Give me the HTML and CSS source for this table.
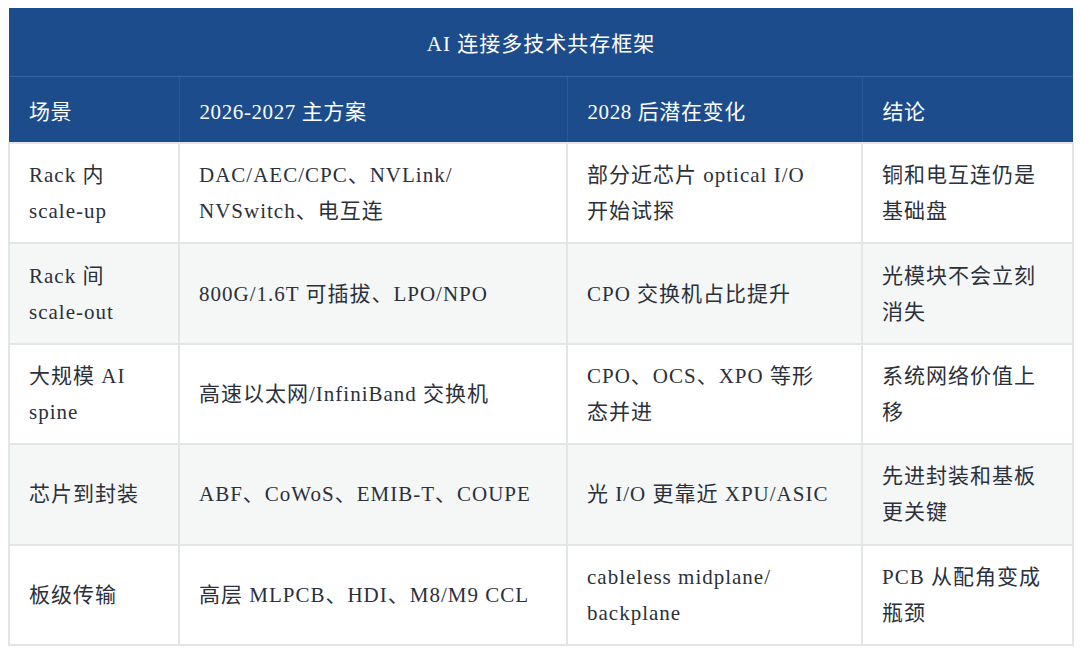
FILE: index.html
```html
<!DOCTYPE html>
<html lang="zh-CN">
<head>
<meta charset="utf-8">
<title>AI 连接多技术共存框架</title>
<link rel="stylesheet" href="styles.css">
</head>
<body>
<table class="grid">
  <colgroup>
    <col class="c1"><col class="c2"><col class="c3"><col class="c4">
  </colgroup>
  <thead>
    <tr class="title-row"><th colspan="4" class="title">AI 连接多技术共存框架</th></tr>
    <tr class="head-row">
      <th>场景</th>
      <th>2026-2027 主方案</th>
      <th>2028 后潜在变化</th>
      <th>结论</th>
    </tr>
  </thead>
  <tbody>
    <tr>
      <td>Rack 内<br>scale-up</td>
      <td>DAC/AEC/CPC、NVLink/<br>NVSwitch、电互连</td>
      <td>部分近芯片 optical I/O<br>开始试探</td>
      <td>铜和电互连仍是<br>基础盘</td>
    </tr>
    <tr class="alt">
      <td>Rack 间<br>scale-out</td>
      <td>800G/1.6T 可插拔、LPO/NPO</td>
      <td>CPO 交换机占比提升</td>
      <td>光模块不会立刻<br>消失</td>
    </tr>
    <tr>
      <td>大规模 AI<br>spine</td>
      <td>高速以太网/InfiniBand 交换机</td>
      <td>CPO、OCS、XPO 等形<br>态并进</td>
      <td>系统网络价值上<br>移</td>
    </tr>
    <tr class="alt">
      <td>芯片到封装</td>
      <td>ABF、CoWoS、EMIB-T、COUPE</td>
      <td>光 I/O 更靠近 XPU/ASIC</td>
      <td>先进封装和基板<br>更关键</td>
    </tr>
    <tr>
      <td>板级传输</td>
      <td>高层 MLPCB、HDI、M8/M9 CCL</td>
      <td>cableless midplane/<br>backplane</td>
      <td>PCB 从配角变成<br>瓶颈</td>
    </tr>
  </tbody>
</table>
</body>
</html>
```

FILE: styles.css
```css
html, body {
  margin: 0;
  background: #ffffff;
}
body {
  padding: 8px;
}
.grid {
  width: 1064px;
  border-collapse: collapse;
  table-layout: fixed;
  font-family: "Liberation Serif", "Noto Sans CJK SC", serif;
  font-size: 21px;
  letter-spacing: 1px;
  color: #2b303a;
}
.c1 { width: 170px; }
.c2 { width: 388px; }
.c3 { width: 295px; }
.c4 { width: 211px; }

.title-row th {
  background: #1c4c8c;
  color: #ffffff;
  font-weight: normal;
  text-align: center;
  height: 68px;
  padding: 0;
  border-bottom: 1px solid #3a68a6;
}
.head-row th {
  background: #1c4c8c;
  color: #ffffff;
  font-weight: normal;
  text-align: left;
  height: 65px;
  padding: 0 20px 0 20px;
  border-left: 1px solid #2a5898;
  letter-spacing: 0.6px;
}
.head-row th:first-child { border-left: none; }

td {
  height: 100.4px;
  padding: 0 20px 0 19px;
  line-height: 36px;
  vertical-align: middle;
  border: 2px solid #e3e6e6;
  box-sizing: border-box;
}
tr.alt td {
  background: #f5f7f7;
}
```
